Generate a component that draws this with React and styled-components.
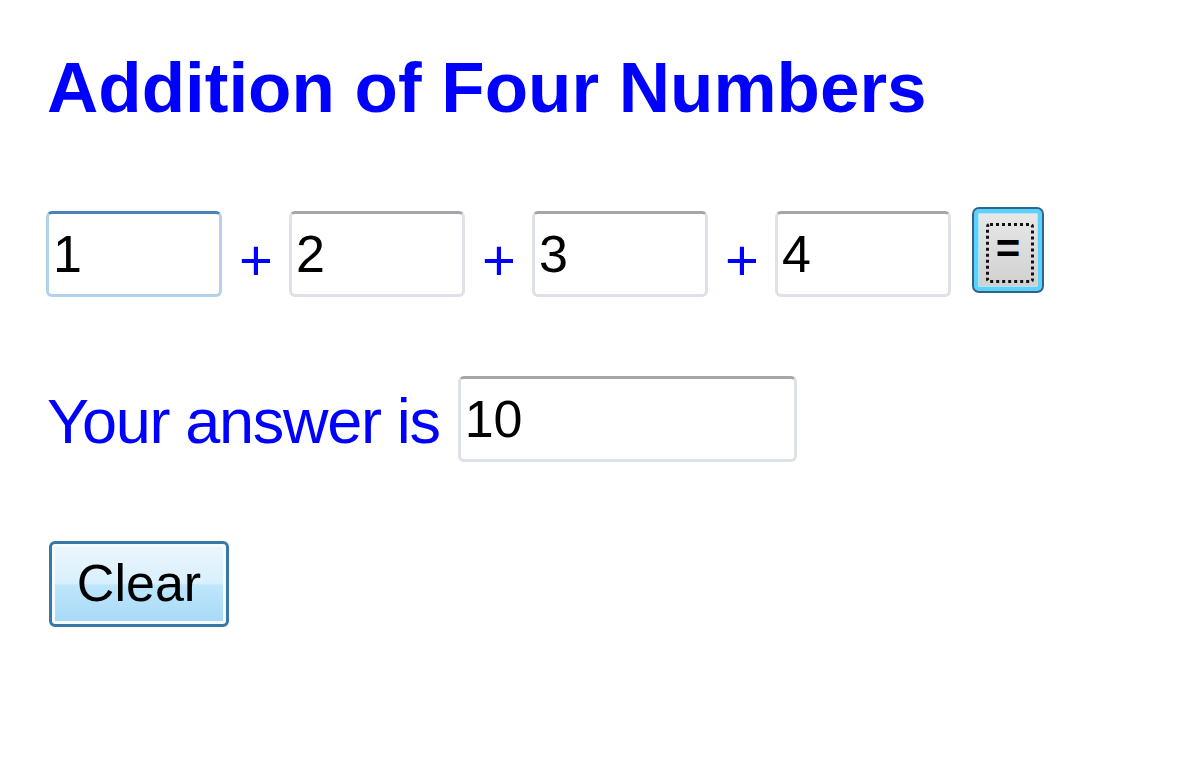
import React, {useState} from "react";
import styled, {createGlobalStyle} from "styled-components";

const GlobalStyle = createGlobalStyle`
  html, body {
    margin: 0;
    padding: 0;
    background: #ffffff;
  }
  body {
    font-family: "Liberation Sans", Arial, sans-serif;
  }
`;

const Page = styled.div`
  display: flex;
  flex-direction: column;
  align-items: flex-start;
  padding: 52px 0 0 46px;
`;

const Title = styled.h1`
  margin: 0 0 84px 1px;
  font-size: 71px;
  line-height: 71px;
  font-weight: bold;
  color: #0000ff;
  white-space: nowrap;
`;

const SumRow = styled.div`
  display: flex;
  align-items: flex-start;
  margin-bottom: 79px;
`;

const NumberBox = styled.input`
  box-sizing: border-box;
  width: ${p => p.$wide ? "339px" : "176px"};
  height: 86px;
  margin-top: ${p => p.$offset ? "4px" : "0"};
  padding: 0 4px;
  border: 3px solid ${p => p.$active ? "#b3d1ea" : "#dde2e9"};
  border-top-color: ${p => p.$active ? "#4a81b8" : "#a4a6ab"};
  border-radius: 6px;
  background: #ffffff;
  font-family: "Liberation Sans", Arial, sans-serif;
  font-size: 52px;
  color: #000000;
  outline: none;
`;

const Plus = styled.span`
  box-sizing: border-box;
  width: 34px;
  height: 90px;
  margin: 0 16px 0 17px;
  padding-top: 10px;
  line-height: 86px;
  font-size: 58px;
  text-align: center;
  color: #0000ff;
`;

const EqualsButton = styled.button`
  box-sizing: border-box;
  display: flex;
  width: 72px;
  height: 86px;
  margin-left: 21px;
  padding: 14px 8px 8px 12px;
  border: 2px solid #2b6590;
  border-radius: 7px;
  background: linear-gradient(#e9e9e9, #dcdcdc 50%, #cfcfcf);
  box-shadow: inset 0 0 0 4px #5fd0f8, inset 0 0 0 5px #a8e6fb;
  cursor: pointer;
`;

const FocusRing = styled.span`
  box-sizing: border-box;
  flex: 1;
  display: flex;
  align-items: center;
  justify-content: center;
  border: 3px dotted #111111;
  border-radius: 4px;
  font-family: "Liberation Sans", Arial, sans-serif;
  font-size: 42px;
  font-weight: bold;
  line-height: 1;
  color: #000000;
  padding: 0 4px 8px 0;
`;

const AnswerRow = styled.div`
  display: flex;
  align-items: flex-start;
  margin-bottom: 79px;
`;

const AnswerLabel = styled.span`
  box-sizing: border-box;
  height: 86px;
  margin: 0 18px 0 1px;
  padding-top: 5px;
  font-size: 63px;
  line-height: 80px;
  letter-spacing: -1.3px;
  color: #0000ff;
  white-space: nowrap;
`;

const ClearButton = styled.button`
  box-sizing: border-box;
  width: 180px;
  height: 86px;
  margin-left: 3px;
  padding: 0 0 2px;
  border: 3px solid #3a77a6;
  border-radius: 6px;
  background: linear-gradient(#eaf6fd, #d9f0fc 50%, #bee6fd 51%, #a7d9f5);
  box-shadow: inset 0 0 0 3px #f4fbff;
  font-family: "Liberation Sans", Arial, sans-serif;
  font-size: 52px;
  color: #000000;
  cursor: pointer;
`;

const App = () => {
    const [nums, setNums] = useState(["1", "2", "3", "4"]);
    const [answer, setAnswer] = useState("10");

    const setNum = (i, v) => {
        const next = [...nums];
        next[i] = v;
        setNums(next);
    };

    const add = () => {
        const total = nums.reduce((s, n) => s + (parseFloat(n) || 0), 0);
        setAnswer(String(total));
    };

    const clear = () => {
        setNums(["", "", "", ""]);
        setAnswer("");
    };

    return (
        <>
            <GlobalStyle/>
            <Page>
                <Title>Addition of Four Numbers</Title>
                <SumRow>
                    {nums.map((n, i) => (
                        <React.Fragment key={i}>
                            {i > 0 && <Plus>+</Plus>}
                            <NumberBox
                                $offset
                                $active={i === 0}
                                value={n}
                                onChange={e => setNum(i, e.target.value)}
                            />
                        </React.Fragment>
                    ))}
                    <EqualsButton onClick={add}>
                        <FocusRing>=</FocusRing>
                    </EqualsButton>
                </SumRow>
                <AnswerRow>
                    <AnswerLabel>Your answer is</AnswerLabel>
                    <NumberBox $wide value={answer} onChange={e => setAnswer(e.target.value)}/>
                </AnswerRow>
                <ClearButton onClick={clear}>Clear</ClearButton>
            </Page>
        </>
    );
};

export default App;
